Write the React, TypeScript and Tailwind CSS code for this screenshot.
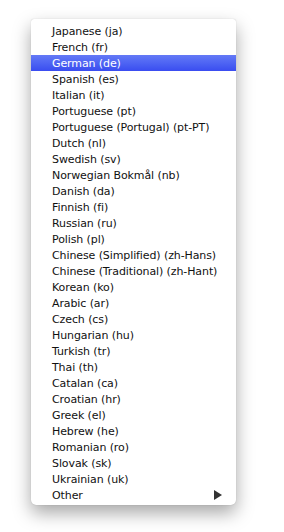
const languages = [
  'Japanese (ja)',
  'French (fr)',
  'German (de)',
  'Spanish (es)',
  'Italian (it)',
  'Portuguese (pt)',
  'Portuguese (Portugal) (pt-PT)',
  'Dutch (nl)',
  'Swedish (sv)',
  'Norwegian Bokmål (nb)',
  'Danish (da)',
  'Finnish (fi)',
  'Russian (ru)',
  'Polish (pl)',
  'Chinese (Simplified) (zh-Hans)',
  'Chinese (Traditional) (zh-Hant)',
  'Korean (ko)',
  'Arabic (ar)',
  'Czech (cs)',
  'Hungarian (hu)',
  'Turkish (tr)',
  'Thai (th)',
  'Catalan (ca)',
  'Croatian (hr)',
  'Greek (el)',
  'Hebrew (he)',
  'Romanian (ro)',
  'Slovak (sk)',
  'Ukrainian (uk)',
];

const selected = 'German (de)';

export default function App() {
  return (
    <div
      className="w-[284px] h-[532px] bg-white pt-[19px] pl-[31px]"
      style={{ fontFamily: '"DejaVu Sans", sans-serif' }}
    >
      <div className="w-[205px] bg-white rounded-b-[5px] rounded-t-[3px] pt-[4px] pb-[2px] shadow-[0_8px_18px_rgba(0,0,0,0.35),0_0_1px_rgba(0,0,0,0.25)]">
        {languages.map((lang) => (
          <MenuItem key={lang} label={lang} active={lang === selected} />
        ))}
        {/* Submenu item */}
        <div className="h-4 flex items-center justify-between pl-[21px] pr-[14px] text-[11px] tracking-[-0.1px] leading-none text-[#111]">
          <span>Other</span>
          <svg width="8" height="10" viewBox="0 0 8 10">
            <path d="M0 0 L8 5 L0 10 Z" fill="#333" />
          </svg>
        </div>
      </div>
    </div>
  );
}

function MenuItem({ label, active }: { label: string; active: boolean }) {
  return (
    <div
      className={
        active
          ? 'h-4 flex items-center pl-[21px] text-[11px] tracking-[-0.1px] leading-none text-white bg-gradient-to-b from-[#6479f6] to-[#3a4cf0]'
          : 'h-4 flex items-center pl-[21px] text-[11px] tracking-[-0.1px] leading-none text-[#111]'
      }
    >
      {label}
    </div>
  );
}
